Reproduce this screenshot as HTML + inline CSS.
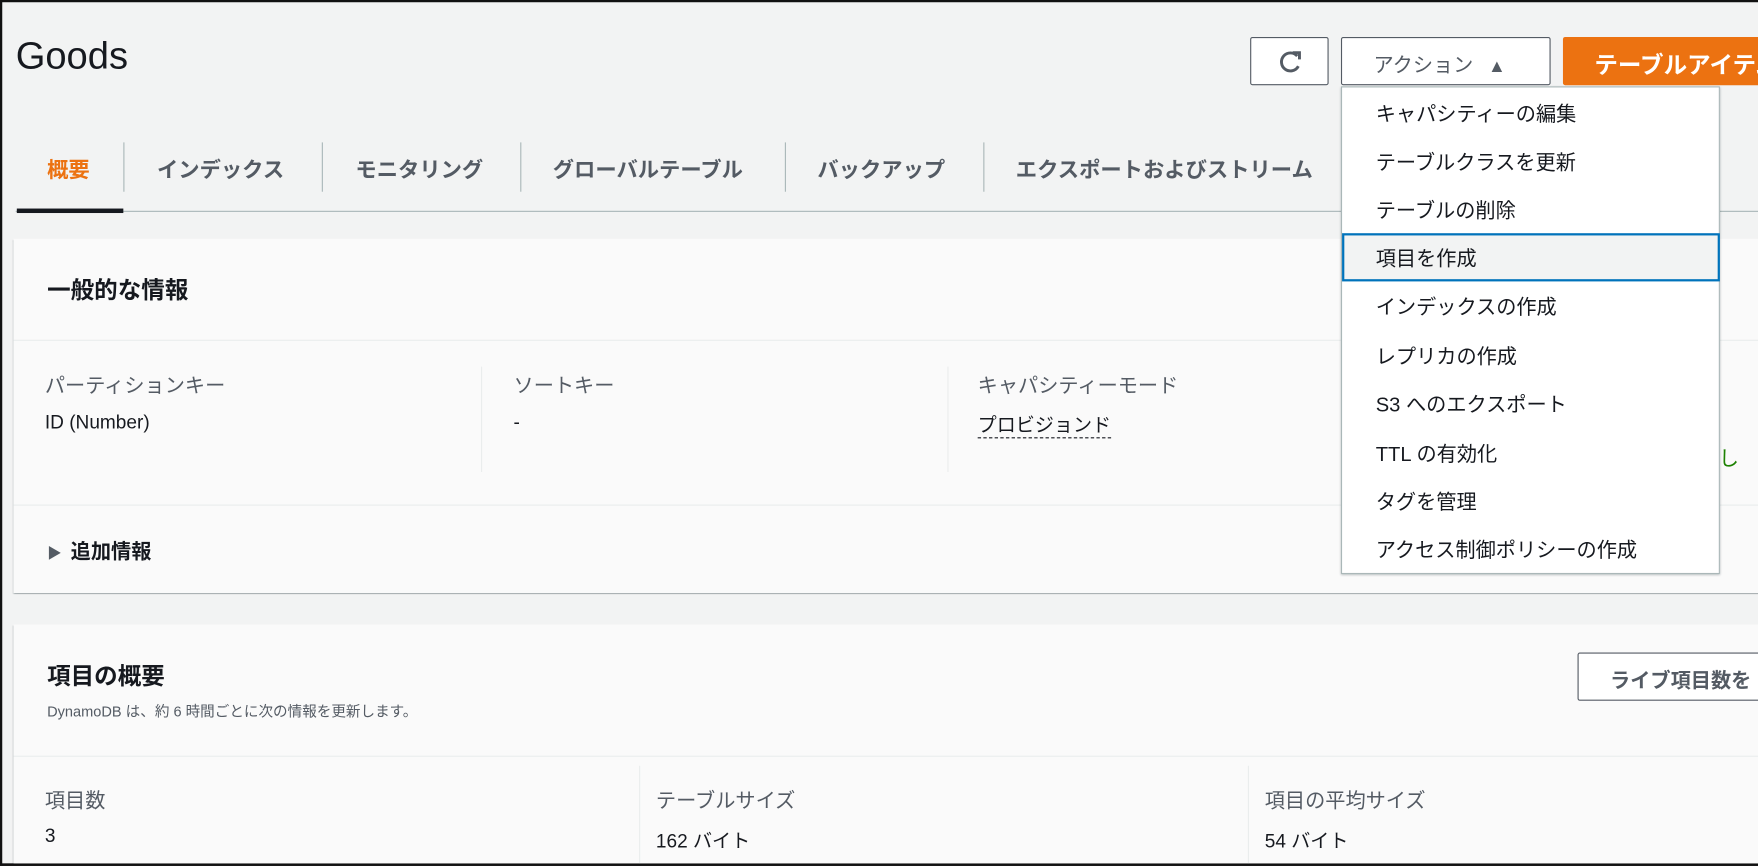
<!DOCTYPE html>
<html><head><meta charset="utf-8"><style>
*{margin:0;padding:0;box-sizing:border-box}
html,body{width:1758px;height:865px;overflow:hidden;background:#000}
#w{position:absolute;left:0;top:0;width:1568px;height:772px;transform:scale(1.1212);transform-origin:0 0;background:#f2f3f3;border:2px solid #111;border-right:none;font-family:"Liberation Sans","Noto Sans CJK JP",sans-serif;color:#16191f;overflow:hidden}
#in{position:absolute;left:-2px;top:-3px;width:1572px;height:780px}
.a{position:absolute;white-space:nowrap}
.tab{position:absolute;top:138px;font-size:19px;font-weight:bold;color:#545b64}
.sep{position:absolute;top:128px;width:1px;height:44px;background:#aab7b8}
.card{position:absolute;left:12px;width:1570px;background:#fafafa;box-shadow:0 1px 1px rgba(0,28,36,.3),1px 1px 1px rgba(0,28,36,.15),-1px 1px 1px rgba(0,28,36,.15)}
.hl{position:absolute;left:0;right:0;height:1px;background:#eaeded}
.vl{position:absolute;width:1px;background:#eaeded}
.lab{font-size:18px;color:#545b64}
.val{font-size:17px;color:#16191f}
.mi{position:absolute;left:30px;font-size:18px;color:#16191f}
.btn{position:absolute;border:1px solid #545b64;border-radius:2px;background:#fff}
</style></head><body><div id="w"><div id="in">
<div class="a" style="left:14px;top:32px;font-size:34px">Goods</div>
<div class="btn" style="left:1115px;top:34px;width:70px;height:43px">
<svg width="70" height="43" viewBox="0 0 70 43"><path d="M41 16 A8 8 0 1 0 42 25" fill="none" stroke="#545b64" stroke-width="2.6"/><path d="M37 13 L43 13 L43 19" fill="none" stroke="#545b64" stroke-width="2.6"/></svg></div>
<div class="btn" style="left:1196px;top:34px;width:187px;height:43px"><div class="a" style="left:28px;top:10px;font-size:18px;color:#545b64">アクション <span style="font-size:16px;margin-left:8px;color:#545b64">▲</span></div></div>
<div class="a" style="left:1394px;top:34px;width:180px;height:43px;background:#ec7211;border-radius:2px"><div class="a" style="left:28px;top:9px;font-size:21px;font-weight:bold;color:#fff">テーブルアイテム</div></div>

<div class="a" style="left:14px;top:189px;width:1560px;height:1px;background:#aab7b8"></div>
<div class="a" style="left:15px;top:187px;width:95px;height:4px;background:#16191f"></div>
<div class="tab" style="left:42px;color:#ec7211">概要</div>
<div class="sep" style="left:110px"></div>
<div class="tab" style="left:140px">インデックス</div>
<div class="sep" style="left:287px"></div>
<div class="tab" style="left:317px">モニタリング</div>
<div class="sep" style="left:464px"></div>
<div class="tab" style="left:493px">グローバルテーブル</div>
<div class="sep" style="left:700px"></div>
<div class="tab" style="left:729px">バックアップ</div>
<div class="sep" style="left:877px"></div>
<div class="tab" style="left:906px">エクスポートおよびストリーム</div>

<div class="card" style="top:214px;height:316px">
<div class="a" style="left:30px;top:30px;font-size:21px;font-weight:bold">一般的な情報</div>
<div class="hl" style="top:90px"></div>
<div class="a lab" style="left:28px;top:117px">パーティションキー</div>
<div class="a val" style="left:28px;top:154px">ID (Number)</div>
<div class="vl" style="left:417px;top:114px;height:94px"></div>
<div class="a lab" style="left:446px;top:117px">ソートキー</div>
<div class="a val" style="left:446px;top:154px">-</div>
<div class="vl" style="left:833px;top:114px;height:94px"></div>
<div class="a lab" style="left:860px;top:117px">キャパシティーモード</div>
<div class="a val" style="left:860px;top:152px;border-bottom:1px dashed #16191f">プロビジョンド</div>
<div class="a" style="left:1521px;top:182px;font-size:18px;color:#1d8102">し</div>
<div class="hl" style="top:237px"></div>
<div class="a" style="left:30px;top:265px;font-size:18px;font-weight:bold"><span style="font-size:13px;color:#545b64;margin-right:8px">▶</span>追加情報</div>
</div>

<div class="card" style="top:558px;height:230px">
<div class="a" style="left:30px;top:30px;font-size:21px;font-weight:bold">項目の概要</div>
<div class="a" style="left:30px;top:67px;font-size:13px;color:#545b64">DynamoDB は、約 6 時間ごとに次の情報を更新します。</div>
<div class="btn" style="left:1395px;top:25px;width:180px;height:43px"><div class="a" style="left:28px;top:10px;font-size:18px;font-weight:bold;color:#545b64">ライブ項目数を</div></div>
<div class="hl" style="top:117px"></div>
<div class="a lab" style="left:28px;top:143px">項目数</div>
<div class="a val" style="left:28px;top:179px">3</div>
<div class="vl" style="left:558px;top:126px;height:110px"></div>
<div class="a lab" style="left:573px;top:143px">テーブルサイズ</div>
<div class="a val" style="left:573px;top:179px">162 バイト</div>
<div class="vl" style="left:1101px;top:126px;height:110px"></div>
<div class="a lab" style="left:1116px;top:143px">項目の平均サイズ</div>
<div class="a val" style="left:1116px;top:179px">54 バイト</div>
</div>

<div class="a" style="left:1196px;top:78px;width:338px;height:435px;background:#fff;border:1px solid #aab7b8;box-shadow:0 1px 2px rgba(0,28,36,.3)">
<div class="a" style="left:0;top:130px;width:337px;height:43px;background:#f2f3f3;border:2px solid #0073bb"></div>
<div class="mi" style="top:10px">キャパシティーの編集</div>
<div class="mi" style="top:53px">テーブルクラスを更新</div>
<div class="mi" style="top:96px">テーブルの削除</div>
<div class="mi" style="top:139px">項目を作成</div>
<div class="mi" style="top:182px">インデックスの作成</div>
<div class="mi" style="top:226px">レプリカの作成</div>
<div class="mi" style="top:269px">S3 へのエクスポート</div>
<div class="mi" style="top:313px">TTL の有効化</div>
<div class="mi" style="top:356px">タグを管理</div>
<div class="mi" style="top:399px">アクセス制御ポリシーの作成</div>
</div>
</div></div></body></html>
